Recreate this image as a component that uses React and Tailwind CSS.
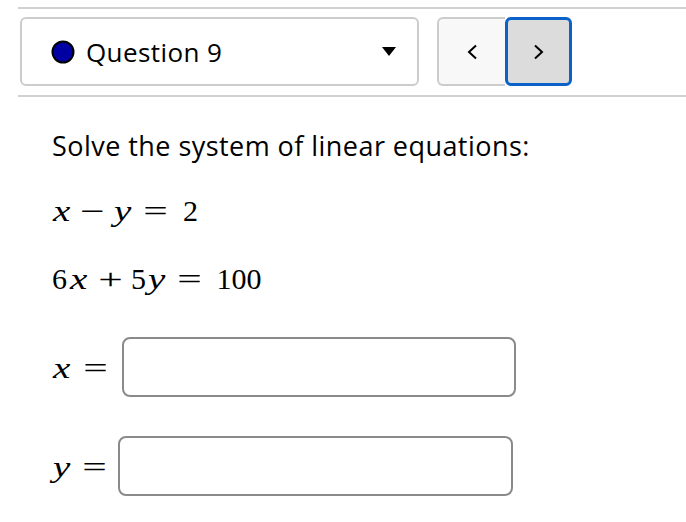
import React from "react";

const sans = { fontFamily: "'Open Sans', Lato, sans-serif" };
const serif = { fontFamily: "'Liberation Serif', 'Times New Roman', serif" };

// fixed-width slots so the math lines up like KaTeX
const Sym = ({ w, ml = 0, italic, wide, children }) => (
  <span
    className={`inline-block text-center ${italic ? "italic" : ""}`}
    style={{ width: w, marginLeft: ml }}
  >
    <span
      className={
        wide ? "inline-block scale-x-[1.45]" : italic ? "inline-block scale-x-[1.3]" : "inline-block"
      }
    >
      {children}
    </span>
  </span>
);

const App = () => {
  return (
    <div className="w-[686px] h-[522px] bg-white pt-[7px] pl-[18px] text-black" style={sans}>
      <div className="h-[2px] bg-[#d0d0d0]" />

      <div className="flex items-center mt-[8px] pl-[2px]">
        <div className="w-[399px] h-[69px] border-2 border-[#cccccc] rounded-[6px] flex items-center pl-[29px] pr-[20px]">
          <svg width="24" height="24" viewBox="0 0 24 24" className="shrink-0">
            <circle cx="12" cy="12" r="10.5" fill="#0000a3" stroke="#000" strokeWidth="2" />
          </svg>
          <span className="ml-[11px] text-[26px] leading-none tracking-[0.4px]">Question 9</span>
          <svg width="16" height="11" viewBox="0 0 16 11" className="ml-auto">
            <path d="M1 1h14L8 10z" fill="#000" />
          </svg>
        </div>

        <div className="flex ml-[18px]">
          <button className="w-[68px] h-[69px] bg-[#f8f8f8] border-2 border-r-0 border-[#cccccc] rounded-l-[6px] flex items-center justify-center">
            <svg width="12" height="16" viewBox="0 0 12 16">
              <path d="M10 1.5 3 8l7 6.5" fill="none" stroke="#000" strokeWidth="2" />
            </svg>
          </button>
          <button className="w-[67px] h-[69px] bg-[#dcdcdc] border-[3px] border-[#0a62c9] rounded-[6px] flex items-center justify-center">
            <svg width="12" height="16" viewBox="0 0 12 16">
              <path d="M2 1.5 9 8l-7 6.5" fill="none" stroke="#000" strokeWidth="2" />
            </svg>
          </button>
        </div>
      </div>

      <div className="h-[2px] bg-[#d0d0d0] mt-[9px]" />

      <div className="pl-[34px]">
        <p className="mt-[32px] text-[27px] leading-[34px] tracking-[0.45px]">Solve the system of linear equations:</p>

        <div className="mt-[30px] flex items-baseline text-[30px] leading-[36px]" style={serif}>
          <Sym w={19} italic>x</Sym>
          <Sym w={21} ml={11} wide>−</Sym>
          <Sym w={19} ml={10} italic>y</Sym>
          <Sym w={25} ml={11} wide>=</Sym>
          <Sym w={15} ml={15}>2</Sym>
        </div>

        <div className="mt-[32px] flex items-baseline text-[30px] leading-[36px]" style={serif}>
          <Sym w={15}>6</Sym>
          <Sym w={20} ml={2} italic>x</Sym>
          <Sym w={22} ml={10} wide>+</Sym>
          <Sym w={15} ml={10}>5</Sym>
          <Sym w={19} ml={1} italic>y</Sym>
          <Sym w={25} ml={11} wide>=</Sym>
          <Sym w={50} ml={12}>100</Sym>
        </div>

        <div className="mt-[40px] flex items-center text-[30px]" style={serif}>
          <Sym w={19} italic>x</Sym>
          <Sym w={25} ml={12} wide>=</Sym>
          <input className="ml-[14px] w-[394px] h-[60px] border-2 border-[#8a8a8a] rounded-[8px] bg-white outline-none" />
        </div>

        <div className="mt-[39px] flex items-center text-[30px]" style={serif}>
          <Sym w={19} italic>y</Sym>
          <Sym w={25} ml={11} wide>=</Sym>
          <input className="ml-[11px] w-[395px] h-[60px] border-2 border-[#8a8a8a] rounded-[8px] bg-white outline-none" />
        </div>
      </div>
    </div>
  );
};

export default App;
